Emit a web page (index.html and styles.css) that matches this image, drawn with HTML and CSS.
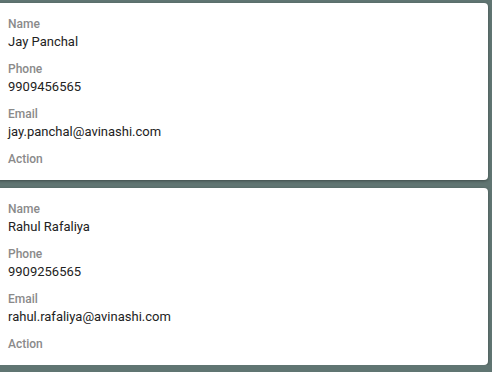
FILE: index.html
```html
<!DOCTYPE html>
<html>
<head>
<meta charset="utf-8">
<link rel="stylesheet" href="styles.css">
</head>
<body>
<div class="list">
  <div class="card">
    <div class="field"><div class="label">Name</div><div class="value">Jay Panchal</div></div>
    <div class="field"><div class="label">Phone</div><div class="value">9909456565</div></div>
    <div class="field"><div class="label">Email</div><div class="value">jay.panchal@avinashi.com</div></div>
    <div class="field"><div class="label">Action</div></div>
  </div>
  <div class="card">
    <div class="field"><div class="label">Name</div><div class="value">Rahul Rafaliya</div></div>
    <div class="field"><div class="label">Phone</div><div class="value">9909256565</div></div>
    <div class="field"><div class="label">Email</div><div class="value">rahul.rafaliya@avinashi.com</div></div>
    <div class="field"><div class="label">Action</div></div>
  </div>
</div>
</body>
</html>
```
FILE: styles.css
```css
html, body {
  margin: 0;
  padding: 0;
  background: #607572;
  font-family: Roboto, "Liberation Sans", sans-serif;
}
.list {
  padding-top: 3px;
  display: flex;
  flex-direction: column;
  gap: 8px;
  margin-left: -4px;
  width: 492px;
}
.card {
  background: #fff;
  border-radius: 4px;
  box-shadow: 0 1px 3px rgba(0,0,0,0.35);
  padding: 13px 12px 13px 12px;
  display: flex;
  flex-direction: column;
  gap: 9px;
}
.label {
  font-size: 12px;
  line-height: 16px;
  font-weight: 500;
  color: #8a8a8a;
}
.value {
  font-size: 13px;
  line-height: 20px;
  color: #222;
}
```
